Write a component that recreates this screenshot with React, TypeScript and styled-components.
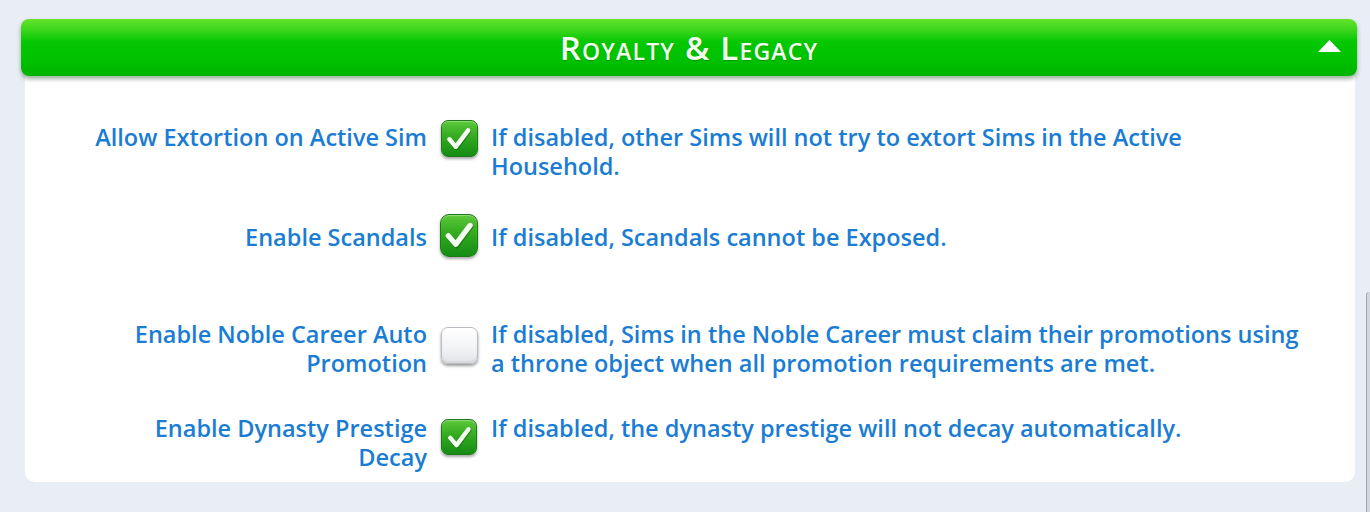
import React from 'react';
import styled, { createGlobalStyle } from 'styled-components';

const GlobalStyle = createGlobalStyle`
  html, body {
    margin: 0;
    padding: 0;
    background: #e9edf5;
  }
  body {
    font-family: "Open Sans", Lato, sans-serif;
    width: 1370px;
    height: 512px;
    overflow: hidden;
  }
`;

const Page = styled.div`
  position: relative;
  height: 512px;
  box-sizing: border-box;
  padding: 19px 13px 0 21px;
`;

const ScrollThumb = styled.div`
  position: absolute;
  left: 1366px;
  top: 292px;
  width: 6px;
  height: 230px;
  border-left: 1px solid #a4a8b0;
  border-top-left-radius: 3px;
  background: #d2d5db;
`;

const Section = styled.section`
  width: 1336px;
  display: flex;
  flex-direction: column;
`;

const Header = styled.div`
  position: relative;
  z-index: 1;
  height: 57px;
  border-radius: 8px;
  background: linear-gradient(
    to bottom,
    #66e22e 0%,
    #3fd81c 18%,
    #05c703 40%,
    #00c200 70%,
    #00b300 100%
  );
  box-shadow: 0 3px 4px rgba(40, 80, 40, 0.45);
  display: flex;
  align-items: center;
  justify-content: center;
`;

const Title = styled.h2`
  margin: 0;
  color: #f4fff0;
  font-family: "Open Sans", sans-serif;
  font-weight: 600;
  font-size: 33px;
  letter-spacing: 1.2px;
  font-variant: small-caps;
  text-shadow: 0 1px 1px rgba(0, 90, 0, 0.35);
`;

const Caret = styled.svg`
  position: absolute;
  right: 15px;
  top: 20px;
`;

const Panel = styled.div`
  margin: 0 2px 0 4px;
  background: #ffffff;
  border-radius: 0 0 10px 10px;
  padding: 47px 0 11px 62px;
`;

const Row = styled.div<{ $height?: number }>`
  display: grid;
  grid-template-columns: 340px 38px 820px;
  column-gap: 13px;
  align-items: start;
  height: ${({ $height }) => ($height ? `${$height}px` : 'auto')};
`;

const Label = styled.div`
  text-align: right;
  color: #1a7dd3;
  font-size: 23.5px;
  font-weight: 600;
  line-height: 28.5px;
`;

const Description = styled.div`
  color: #1a7dd3;
  font-size: 23.5px;
  font-weight: 600;
  line-height: 28.5px;
`;

const BoxSlot = styled.div<{ $offset: number }>`
  display: flex;
  justify-content: center;
  margin-top: ${({ $offset }) => $offset}px;
`;

const Box = styled.div<{ $checked: boolean; $size: number }>`
  width: ${({ $size }) => $size}px;
  height: ${({ $size }) => $size}px;
  box-sizing: border-box;
  border-radius: ${({ $size }) => Math.round($size * 0.2)}px;
  display: flex;
  align-items: center;
  justify-content: center;
  border: 1px solid ${({ $checked }) => ($checked ? '#1b7a16' : '#b9bcc2')};
  background: ${({ $checked }) =>
    $checked
      ? 'linear-gradient(to bottom, #5cc83a 0%, #33aa20 45%, #158c14 100%)'
      : 'linear-gradient(to bottom, #ffffff 0%, #f1f2f4 60%, #e2e4e8 100%)'};
  box-shadow: ${({ $checked }) =>
    $checked
      ? '0 2px 3px rgba(0, 0, 0, 0.35), inset 0 1px 1px rgba(255,255,255,0.35)'
      : '0 2px 3px rgba(0, 0, 0, 0.4), inset 0 -2px 2px rgba(0,0,0,0.06)'};
`;

const Check = ({ size }: { size: number }) => (
  <svg width={size * 0.8} height={size * 0.8} viewBox="0 0 30 30">
    <path
      d="M5.5 15.5 L12 23 L24.5 6.5"
      fill="none"
      stroke="rgba(0,60,0,0.35)"
      strokeWidth="5"
      strokeLinecap="round"
      strokeLinejoin="round"
      transform="translate(0.6 1)"
    />
    <path
      d="M5.5 15.5 L12 23 L24.5 6.5"
      fill="none"
      stroke="#f4fff2"
      strokeWidth="4.6"
      strokeLinecap="round"
      strokeLinejoin="round"
    />
  </svg>
);

interface Setting {
  label: string;
  description: string;
  checked: boolean;
  size: number;
  offset: number;
  height?: number;
}

const settings: Setting[] = [
  {
    label: 'Allow Extortion on Active Sim',
    description:
      'If disabled, other Sims will not try to extort Sims in the Active Household.',
    checked: true,
    size: 37,
    offset: -3,
    height: 100,
  },
  {
    label: 'Enable Scandals',
    description: 'If disabled, Scandals cannot be Exposed.',
    checked: true,
    size: 43,
    offset: -9,
    height: 97,
  },
  {
    label: 'Enable Noble Career Auto Promotion',
    description:
      'If disabled, Sims in the Noble Career must claim their promotions using a throne object when all promotion requirements are met.',
    checked: false,
    size: 37,
    offset: 7,
    height: 94,
  },
  {
    label: 'Enable Dynasty Prestige Decay',
    description: 'If disabled, the dynasty prestige will not decay automatically.',
    checked: true,
    size: 36,
    offset: 5,
  },
];

export default function App() {
  return (
    <Page>
      <GlobalStyle />
      <Section>
        <Header>
          <Title>Royalty &amp; Legacy</Title>
          <Caret width="25" height="14" viewBox="0 0 25 14">
            <path d="M12.5 1 L24 13 L1 13 Z" fill="#ffffff" />
          </Caret>
        </Header>
        <Panel>
          {settings.map((s) => (
            <Row key={s.label} $height={s.height}>
              <Label>{s.label}</Label>
              <BoxSlot $offset={s.offset}>
                <Box $checked={s.checked} $size={s.size}>
                  {s.checked && <Check size={s.size} />}
                </Box>
              </BoxSlot>
              <Description>{s.description}</Description>
            </Row>
          ))}
        </Panel>
      </Section>
      <ScrollThumb />
    </Page>
  );
}
